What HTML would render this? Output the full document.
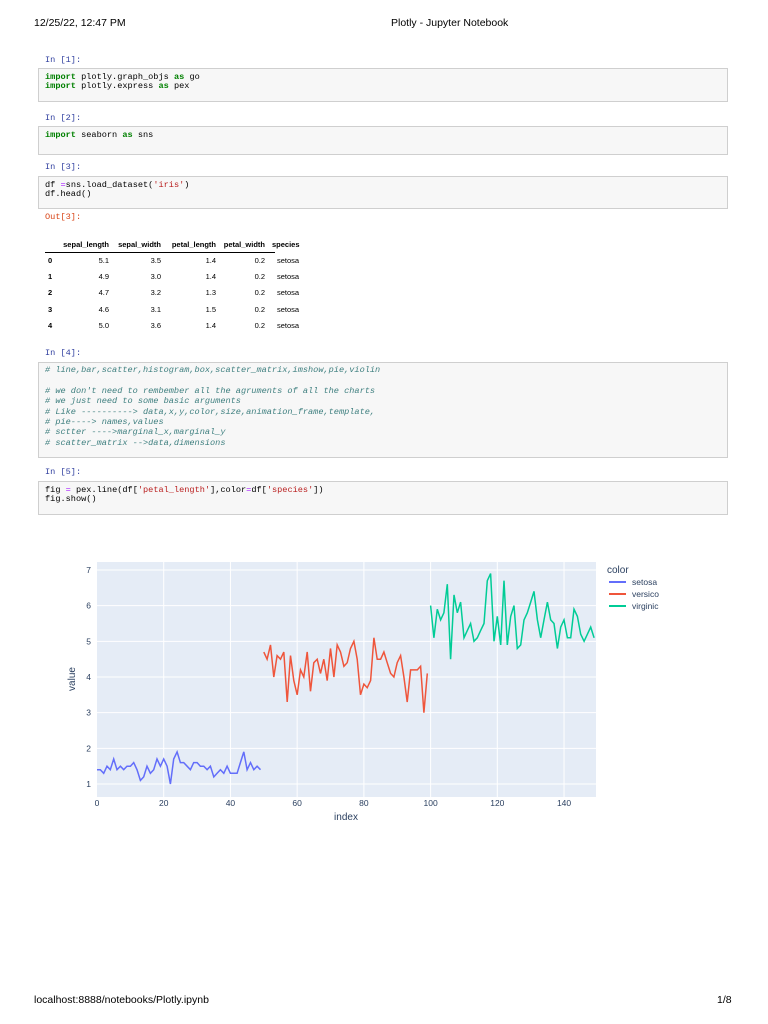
<!DOCTYPE html>
<html><head><meta charset="utf-8"><style>
body{margin:0;width:768px;height:1024px;background:#fff;position:relative;font-family:"Liberation Sans",sans-serif;overflow:hidden}
.a{position:absolute;white-space:pre}
.hd{font-size:10.5px;color:#000}
.p{font-family:"Liberation Mono",monospace;font-size:8.6px;color:#303f9f}
.o{color:#d84315}
.box{position:absolute;left:38px;width:690px;background:#f7f7f7;border:1px solid #cfcfcf;box-sizing:border-box}
.c{position:absolute;left:45px;font-family:"Liberation Mono",monospace;font-size:8.6px;line-height:9.4px;color:#000;white-space:pre}
.k{color:#008000;font-weight:bold}
.s{color:#ba2121}
.op{color:#aa22ff}
.cm{color:#408080;font-style:italic}
.t{position:absolute;font-size:7.5px;color:#000;text-align:right}
.th{font-weight:bold}
</style></head><body>
<div class="a hd" style="left:34px;top:17px">12/25/22, 12:47 PM</div>
<div class="a hd" style="left:391px;top:17px">Plotly - Jupyter Notebook</div>
<div class="a hd" style="left:34px;top:994px">localhost:8888/notebooks/Plotly.ipynb</div>
<div class="a hd" style="left:717px;top:994px">1/8</div>

<div class="a p" style="left:45px;top:55px">In [1]:</div>
<div class="box" style="top:68px;height:34px"></div>
<div class="c" style="top:73px"><span class="k">import</span> plotly.graph_objs <span class="k">as</span> go
<span class="k">import</span> plotly.express <span class="k">as</span> pex</div>

<div class="a p" style="left:45px;top:113px">In [2]:</div>
<div class="box" style="top:126px;height:29px"></div>
<div class="c" style="top:131px"><span class="k">import</span> seaborn <span class="k">as</span> sns</div>

<div class="a p" style="left:45px;top:162px">In [3]:</div>
<div class="box" style="top:176px;height:33px"></div>
<div class="c" style="top:181px">df <span class="op">=</span>sns.load_dataset(<span class="s">'iris'</span>)
df.head()</div>
<div class="a p o" style="left:45px;top:212px">Out[3]:</div>

<div style="position:absolute;left:45px;top:252px;width:230px;height:1px;background:#000"></div>
<div id="tbl"></div>

<div class="a p" style="left:45px;top:348px">In [4]:</div>
<div class="box" style="top:362px;height:96px"></div>
<div class="c cm" style="top:365px;line-height:10.4px"># line,bar,scatter,histogram,box,scatter_matrix,imshow,pie,violin

# we don't need to rembember all the agruments of all the charts
# we just need to some basic arguments
# Like ----------> data,x,y,color,size,animation_frame,template,
# pie----> names,values
# sctter ---->marginal_x,marginal_y
# scatter_matrix -->data,dimensions</div>

<div class="a p" style="left:45px;top:467px">In [5]:</div>
<div class="box" style="top:481px;height:34px"></div>
<div class="c" style="top:486px">fig <span class="op">=</span> pex.line(df[<span class="s">'petal_length'</span>],color<span class="op">=</span>df[<span class="s">'species'</span>])
fig.show()</div>

<svg id="plot" style="position:absolute;left:0;top:0" width="768" height="1024"></svg>

<script>
var tb=document.getElementById('tbl'),h='';
function cell(x,y,t,b,al){h+='<div class="t'+(b?' th':'')+'" style="left:'+(al=='l'?x:x-60)+'px;top:'+y+'px;width:60px;text-align:'+(al=='l'?'left':'right')+'">'+t+'</div>';}
var hdr=['sepal_length','sepal_width','petal_length','petal_width'],xr=[109,161,216,265];
hdr.forEach(function(t,i){cell(xr[i],240,t,1)});cell(272,240,'species',1,'l');
var rows=[['5.1','3.5','1.4','0.2'],['4.9','3.0','1.4','0.2'],['4.7','3.2','1.3','0.2'],['4.6','3.1','1.5','0.2'],['5.0','3.6','1.4','0.2']];
var ry=[256,272,288,305,321];
rows.forEach(function(r,j){cell(48,ry[j],''+j,1,'l');r.forEach(function(v,i){cell(xr[i],ry[j],v)});cell(277,ry[j],'setosa',0,'l')});
tb.innerHTML=h;

var d=[1.4,1.4,1.3,1.5,1.4,1.7,1.4,1.5,1.4,1.5,1.5,1.6,1.4,1.1,1.2,1.5,1.3,1.4,1.7,1.5,1.7,1.5,1.0,1.7,1.9,1.6,1.6,1.5,1.4,1.6,1.6,1.5,1.5,1.4,1.5,1.2,1.3,1.4,1.3,1.5,1.3,1.3,1.3,1.6,1.9,1.4,1.6,1.4,1.5,1.4,
4.7,4.5,4.9,4.0,4.6,4.5,4.7,3.3,4.6,3.9,3.5,4.2,4.0,4.7,3.6,4.4,4.5,4.1,4.5,3.9,4.8,4.0,4.9,4.7,4.3,4.4,4.8,5.0,4.5,3.5,3.8,3.7,3.9,5.1,4.5,4.5,4.7,4.4,4.1,4.0,4.4,4.6,4.0,3.3,4.2,4.2,4.2,4.3,3.0,4.1,
6.0,5.1,5.9,5.6,5.8,6.6,4.5,6.3,5.8,6.1,5.1,5.3,5.5,5.0,5.1,5.3,5.5,6.7,6.9,5.0,5.7,4.9,6.7,4.9,5.7,6.0,4.8,4.9,5.6,5.8,6.1,6.4,5.6,5.1,5.6,6.1,5.6,5.5,4.8,5.4,5.6,5.1,5.1,5.9,5.7,5.2,5.0,5.2,5.4,5.1];
var X0=97,XS=3.336,Y1=784,YS=35.67;
function X(i){return X0+i*XS}function Y(v){return Y1-(v-1)*YS}
var s='<rect x="97" y="562" width="499" height="235" fill="#e5ecf6"/>';
for(var v=1;v<=7;v++){s+='<line x1="97" x2="596" y1="'+Y(v)+'" y2="'+Y(v)+'" stroke="#fff" stroke-width="1"/>';
s+='<text x="91" y="'+(Y(v)+3)+'" font-size="8.5" fill="#2a3f5f" text-anchor="end" font-family="Liberation Sans">'+v+'</text>';}
for(var i=0;i<=140;i+=20){if(i>0)s+='<line y1="562" y2="797" x1="'+X(i)+'" x2="'+X(i)+'" stroke="#fff"/>';
s+='<text x="'+X(i)+'" y="806" font-size="8.5" fill="#2a3f5f" text-anchor="middle" font-family="Liberation Sans">'+i+'</text>';}
var cols=['#636efa','#ef553b','#00cc96'];
for(var g=0;g<3;g++){var p=[];for(var i=g*50;i<g*50+50;i++)p.push(X(i).toFixed(1)+','+Y(d[i]).toFixed(1));
s+='<polyline fill="none" stroke="'+cols[g]+'" stroke-width="1.5" points="'+p.join(' ')+'"/>';}
s+='<text x="346" y="820" font-size="10" fill="#2a3f5f" text-anchor="middle" font-family="Liberation Sans">index</text>';
s+='<text transform="translate(75,679) rotate(-90)" font-size="10" fill="#2a3f5f" text-anchor="middle" font-family="Liberation Sans">value</text>';
s+='<text x="607" y="573" font-size="10" fill="#2a3f5f" font-family="Liberation Sans">color</text>';
var nm=['setosa','versico','virginic'];
for(var g=0;g<3;g++){var yy=582+g*12;s+='<line x1="609" x2="626" y1="'+yy+'" y2="'+yy+'" stroke="'+cols[g]+'" stroke-width="2"/><text x="632" y="'+(yy+3)+'" font-size="8.5" fill="#2a3f5f" font-family="Liberation Sans">'+nm[g]+'</text>';}
document.getElementById('plot').innerHTML=s;
</script>
</body></html>
